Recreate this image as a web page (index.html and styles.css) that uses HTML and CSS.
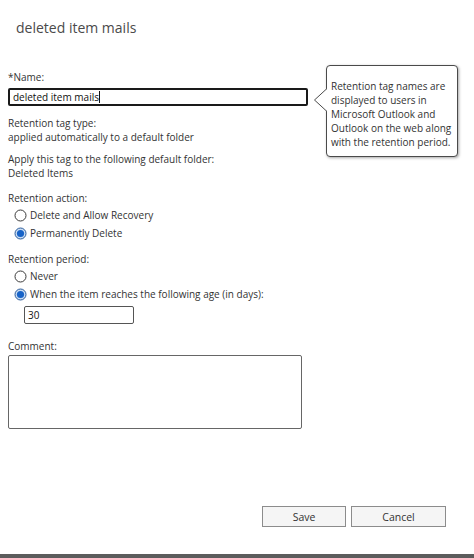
FILE: index.html
```html
<!DOCTYPE html>
<html lang="en">
<head>
<meta charset="utf-8">
<title>deleted item mails</title>
<link rel="stylesheet" href="styles.css">
</head>
<body>
<div class="page">
  <h1 class="title">deleted item mails</h1>
  <form class="form">
    <div class="group">
      <div class="line">*Name:</div>
      <div class="field name-field"><span class="value">deleted item mails</span><span class="caret"></span></div>
    </div>
    <div class="group g-type">
      <div class="line">Retention tag type:</div>
      <div class="line">applied automatically to a default folder</div>
    </div>
    <div class="group g-folder">
      <div class="line">Apply this tag to the following default folder:</div>
      <div class="line">Deleted Items</div>
    </div>
    <div class="group g-action">
      <div class="line">Retention action:</div>
      <div class="radios">
        <div class="radio"><svg class="rb" width="13" height="13" viewBox="0 0 13 13"><circle cx="6.5" cy="6.5" r="5.5" fill="#fff" stroke="#3a3a3a" stroke-width="1"/></svg><span>Delete and Allow Recovery</span></div>
        <div class="radio"><svg class="rb" width="13" height="13" viewBox="0 0 13 13"><circle cx="6.5" cy="6.5" r="5.5" fill="#c9dcf3" stroke="#2d5d9c" stroke-width="1"/><circle cx="6.5" cy="6.5" r="3.6" fill="#1763c8"/></svg><span>Permanently Delete</span></div>
      </div>
    </div>
    <div class="group g-period">
      <div class="line">Retention period:</div>
      <div class="radios">
        <div class="radio"><svg class="rb" width="13" height="13" viewBox="0 0 13 13"><circle cx="6.5" cy="6.5" r="5.5" fill="#fff" stroke="#3a3a3a" stroke-width="1"/></svg><span>Never</span></div>
        <div class="radio"><svg class="rb" width="13" height="13" viewBox="0 0 13 13"><circle cx="6.5" cy="6.5" r="5.5" fill="#c9dcf3" stroke="#2d5d9c" stroke-width="1"/><circle cx="6.5" cy="6.5" r="3.6" fill="#1763c8"/></svg><span>When the item reaches the following age (in days):</span></div>
      </div>
      <div class="field days-field"><span class="value">30</span></div>
    </div>
    <div class="group g-comment">
      <div class="line">Comment:</div>
      <div class="field comment-field"></div>
    </div>
    <div class="actions">
      <button type="button" class="btn btn-save">Save</button>
      <button type="button" class="btn btn-cancel">Cancel</button>
    </div>
  </form>
  <div class="bottom-bar"></div>
  <div class="tooltip">
    <svg class="tip-arrow" width="15" height="24" viewBox="0 0 15 24"><path d="M14 0.5 L1.5 12 L14 23.5" fill="#fff" stroke="#4a4a4a" stroke-width="1"/></svg>
    <p>Retention tag names are<br>displayed to users in<br>Microsoft Outlook and<br>Outlook on the web along<br>with the retention period.</p>
  </div>
</div>
</body>
</html>
```
FILE: styles.css
```css
html, body {
  margin: 0;
  padding: 0;
  background: #fff;
}
body {
  font-family: "Open Sans", "Noto Sans", "Liberation Sans", sans-serif;
  color: #333;
  font-size: 10px;
}
.page {
  position: relative;
  width: 474px;
  height: 558px;
  overflow: hidden;
  display: flex;
  flex-direction: column;
}
.title {
  margin: 17px 0 0 16px;
  font-size: 14px;
  font-weight: 400;
  line-height: 22px;
  color: #4a4a4a;
  letter-spacing: 0;
}
.form {
  display: flex;
  flex-direction: column;
  padding: 0 0 0 8px;
  margin-top: 31px;
  flex: 1;
}
.line {
  line-height: 14px;
  white-space: nowrap;
}
.field {
  box-sizing: border-box;
  background: #fff;
  display: flex;
  align-items: center;
}
.name-field {
  margin-top: 4px;
  width: 300px;
  height: 18px;
  border: 2px solid #1a1a1a;
  border-radius: 2px;
  padding-left: 3px;
  color: #111;
}
.caret {
  display: inline-block;
  width: 1px;
  height: 12px;
  background: #111;
}
.g-type { margin-top: 10px; }
.g-folder { margin-top: 8px; }
.g-action { margin-top: 11px; }
.g-period { margin-top: 10px; }
.g-comment { margin-top: 15px; }
.radios {
  margin-top: 1px;
  display: flex;
  flex-direction: column;
}
.radio {
  height: 18px;
  display: flex;
  align-items: center;
  gap: 3px;
  padding-left: 6px;
  white-space: nowrap;
}
.rb { flex: none; }
.days-field {
  margin: 3px 0 0 16px;
  width: 110px;
  height: 18px;
  border: 1px solid #555;
  border-radius: 2px;
  padding-left: 3px;
  color: #111;
}
.comment-field {
  margin-top: 2px;
  width: 294px;
  height: 74px;
  border: 1px solid #666;
  border-radius: 2px;
}
.actions {
  margin-top: auto;
  margin-bottom: 27px;
  display: flex;
  gap: 5px;
  padding-left: 254px;
}
.btn {
  box-sizing: border-box;
  height: 21px;
  border: 1px solid #8c8c8c;
  background: #f5f5f5;
  font-family: inherit;
  font-size: 10.5px;
  color: #333;
  padding: 0;
  border-radius: 0;
}
.btn-save { width: 84px; }
.btn-cancel { width: 95px; }
.bottom-bar {
  height: 4px;
  background: #5c5c5c;
  flex: none;
}
.tooltip {
  position: absolute;
  left: 326px;
  top: 65px;
  width: 132px;
  height: 92px;
  box-sizing: border-box;
  border: 1px solid #4a4a4a;
  border-radius: 4px;
  background: #fff;
  box-shadow: 1px 1px 3px rgba(0, 0, 0, 0.35);
  padding: 13px 2px 0 4px;
}
.tooltip p {
  margin: 0;
  line-height: 14px;
  font-size: 10px;
  color: #333;
  white-space: nowrap;
}
.tip-arrow {
  position: absolute;
  left: -14px;
  top: 22px;
}
```
